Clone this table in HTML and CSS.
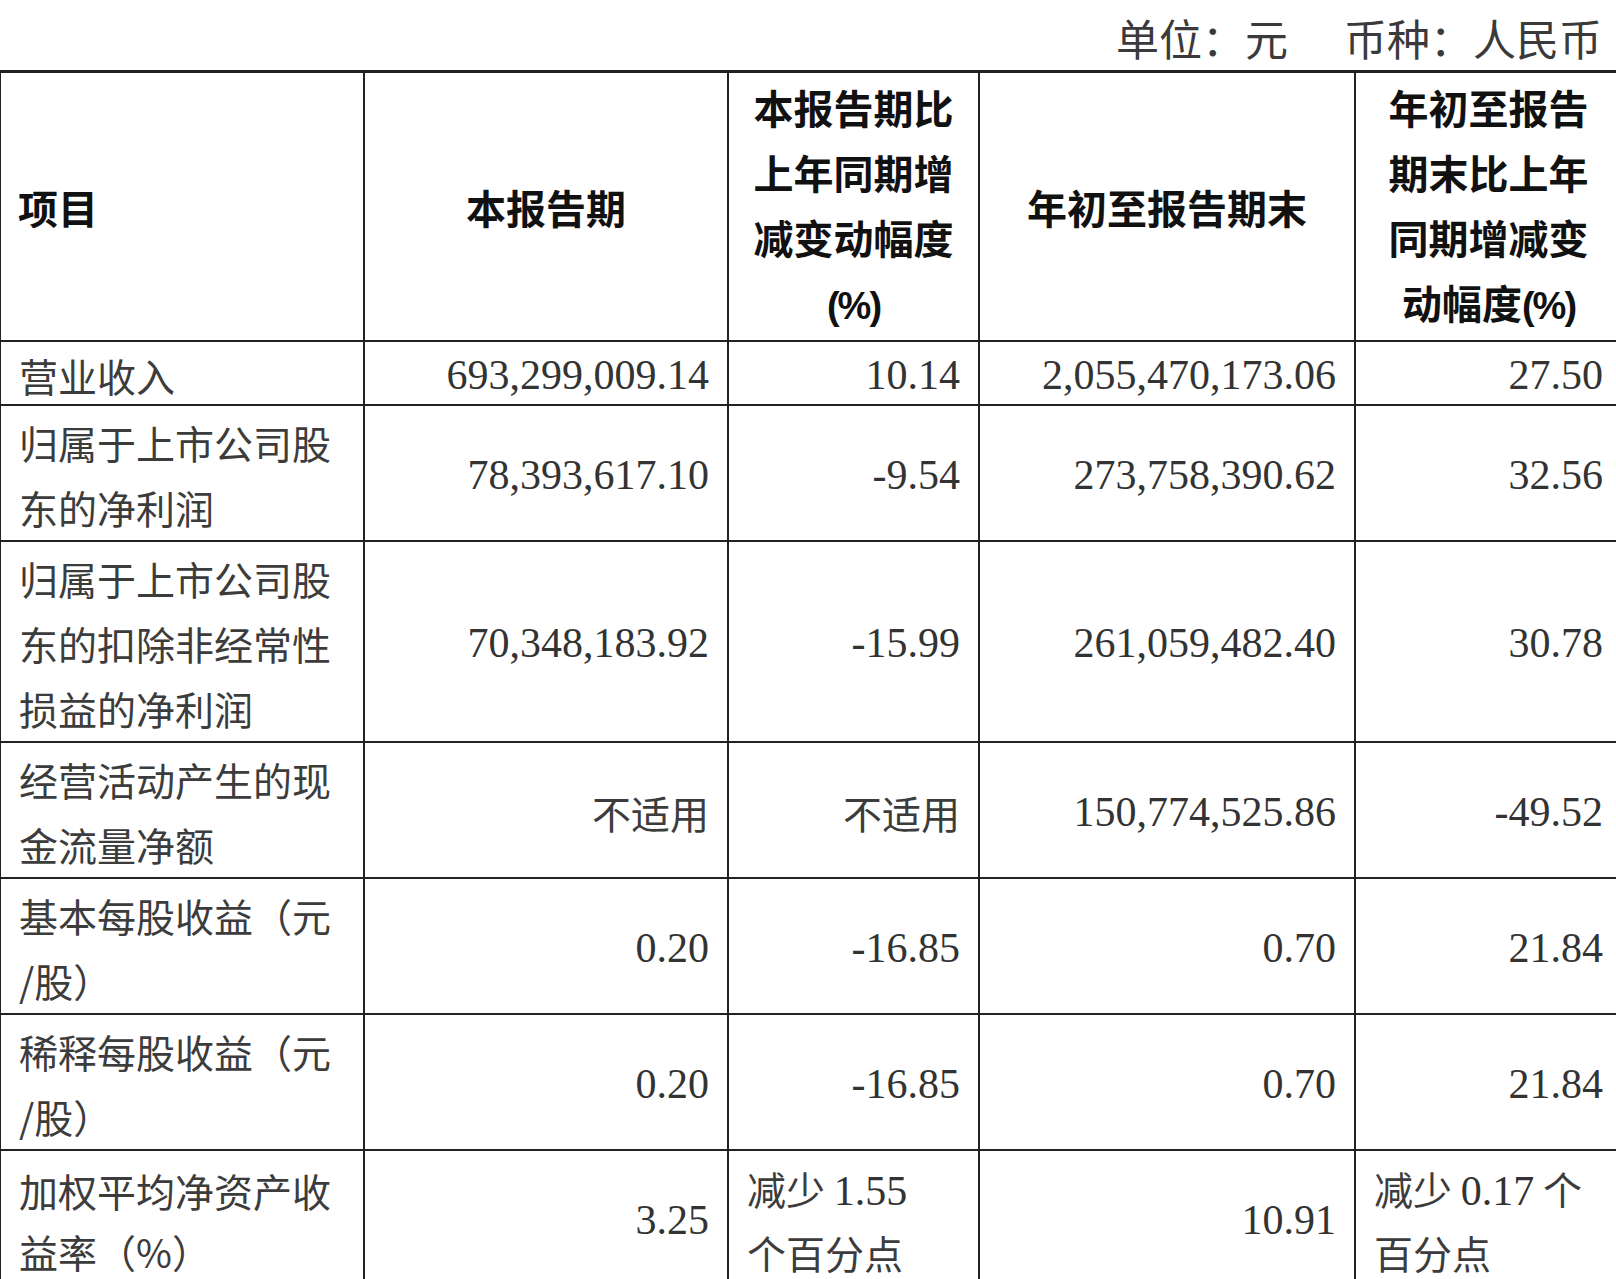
FILE: index.html
```html
<!DOCTYPE html>
<html lang="zh-CN">
<head>
<meta charset="utf-8">
<title>主要会计数据和财务指标</title>
<link rel="stylesheet" href="styles.css">
</head>
<body>
<div class="page">
  <div class="unit"><span>单位：元</span><span>币种：人民币</span></div>
  <table class="fin">
    <colgroup>
      <col class="c1"><col class="c2"><col class="c3"><col class="c4"><col class="c5">
    </colgroup>
    <thead>
      <tr>
        <th class="left">项目</th>
        <th>本报告期</th>
        <th>本报告期比<br>上年同期增<br>减变动幅度<br><span class="pct">(%)</span></th>
        <th>年初至报告期末</th>
        <th>年初至报告<br>期末比上年<br>同期增减变<br>动幅度<span class="pct">(%)</span></th>
      </tr>
    </thead>
    <tbody>
      <tr class="short">
        <td class="lbl">营业收入</td>
        <td class="n">693,299,009.14</td>
        <td class="n">10.14</td>
        <td class="n">2,055,470,173.06</td>
        <td class="n">27.50</td>
      </tr>
      <tr>
        <td class="lbl">归属于上市公司股<br>东的净利润</td>
        <td class="n">78,393,617.10</td>
        <td class="n">-9.54</td>
        <td class="n">273,758,390.62</td>
        <td class="n">32.56</td>
      </tr>
      <tr>
        <td class="lbl">归属于上市公司股<br>东的扣除非经常性<br>损益的净利润</td>
        <td class="n">70,348,183.92</td>
        <td class="n">-15.99</td>
        <td class="n">261,059,482.40</td>
        <td class="n">30.78</td>
      </tr>
      <tr>
        <td class="lbl">经营活动产生的现<br>金流量净额</td>
        <td class="lbl right">不适用</td>
        <td class="lbl right">不适用</td>
        <td class="n">150,774,525.86</td>
        <td class="n">-49.52</td>
      </tr>
      <tr>
        <td class="lbl">基本每股收益（元<br>/股）</td>
        <td class="n">0.20</td>
        <td class="n">-16.85</td>
        <td class="n">0.70</td>
        <td class="n">21.84</td>
      </tr>
      <tr>
        <td class="lbl">稀释每股收益（元<br>/股）</td>
        <td class="n">0.20</td>
        <td class="n">-16.85</td>
        <td class="n">0.70</td>
        <td class="n">21.84</td>
      </tr>
      <tr class="last">
        <td class="lbl">加权平均净资产收<br>益率（%）</td>
        <td class="n">3.25</td>
        <td class="lbl mix">减少 <span class="d">1.55</span><br>个百分点</td>
        <td class="n">10.91</td>
        <td class="lbl mix">减少 <span class="d">0.17</span> 个<br>百分点</td>
      </tr>
    </tbody>
  </table>
</div>
</body>
</html>
```
FILE: styles.css
```css
html, body {
  margin: 0;
  padding: 0;
  background: #ffffff;
  overflow: hidden;
}

.page {
  width: 1616px;
  height: 1279px;
  overflow: hidden;
}

.unit {
  display: flex;
  justify-content: flex-end;
  gap: 56px;
  height: 64px;
  padding: 6px 14px 0 0;
  line-height: 62px;
  font-family: "Noto Sans CJK SC", sans-serif;
  font-size: 43px;
  color: #3a3a3a;
}

.fin {
  border-collapse: collapse;
  table-layout: fixed;
  width: 1622px;
  margin-left: -1px;
}

.c1 { width: 364px; }
.c2 { width: 364px; }
.c3 { width: 251px; }
.c4 { width: 376px; }
.c5 { width: 267px; }

.fin th,
.fin td {
  border: 2px solid #222222;
  vertical-align: middle;
}

.fin thead tr:first-child th {
  border-top: 3px solid #222222;
}

.fin th {
  padding: 2px 6px 1px;
  line-height: 65px;
  font-family: "Noto Sans CJK SC", sans-serif;
  font-size: 40px;
  font-weight: 700;
  color: #111111;
  text-align: center;
}

.fin th.left {
  text-align: left;
  padding-left: 17px;
}

.pct {
  font-family: "Liberation Sans", sans-serif;
  font-size: 38px;
  letter-spacing: -2px;
}

.fin td {
  padding: 4px 18px 0;
  line-height: 65px;
}

.fin tr.short td {
  line-height: 58px;
}

.fin tr.last td {
  padding-top: 7px;
  line-height: 61px;
}

.lbl {
  font-family: "Noto Sans CJK SC", sans-serif;
  font-size: 39px;
  color: #3c3c3c;
  text-align: left;
}

.lbl.right {
  text-align: right;
}

.n {
  font-family: "Liberation Serif", serif;
  font-size: 42px;
  color: #333333;
  text-align: right;
  white-space: nowrap;
}

.mix .d {
  font-family: "Liberation Serif", serif;
  font-size: 42px;
  color: #333333;
}
```
